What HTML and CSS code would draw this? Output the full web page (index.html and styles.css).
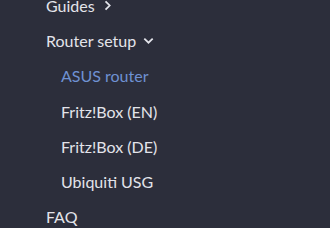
FILE: index.html
```html
<!DOCTYPE html>
<html lang="en">
  <head>
    <meta charset="UTF-8">
    <title>Docs nav</title>
    <link rel="stylesheet" href="styles.css">
  </head>
  <body>
    <nav class="sidebar">
      <ul class="menu">
        <li class="item"><a href="#">Guides
          <svg class="chev" viewBox="0 0 10 10"><path d="M3.2 1.2 7 5 3.2 8.8"/></svg></a></li>
        <li class="item"><a href="#">Router setup
          <svg class="chev" viewBox="0 0 10 10"><path d="M1.2 3.2 5 7 8.8 3.2"/></svg></a>
          <ul class="sub">
            <li class="item"><a href="#" class="active">ASUS router</a></li>
            <li class="item"><a href="#">Fritz!Box (EN)</a></li>
            <li class="item"><a href="#">Fritz!Box (DE)</a></li>
            <li class="item"><a href="#">Ubiquiti USG</a></li>
          </ul>
        </li>
        <li class="item"><a href="#">FAQ</a></li>
      </ul>
    </nav>
  </body>
</html>
```
FILE: styles.css
```css
body {
  margin: 0;
  background: #2c2e3b;
  font-family: Lato, "Noto Sans", sans-serif;
  font-size: 16px;
  color: #e3e4ea;
  overflow: hidden;
}

.menu,
.sub {
  list-style: none;
  margin: 0;
  padding: 0;
}

.menu {
  margin-top: -12px;
  padding-left: 46px;
}

.sub {
  padding-left: 15px;
}

.item a {
  display: flex;
  align-items: center;
  gap: 7px;
  height: 35.2px;
  color: inherit;
  text-decoration: none;
}

.item a.active {
  color: #6f91d2;
}

.chev {
  width: 11px;
  height: 11px;
  fill: none;
  stroke: currentColor;
  stroke-width: 1.6;
}
```
